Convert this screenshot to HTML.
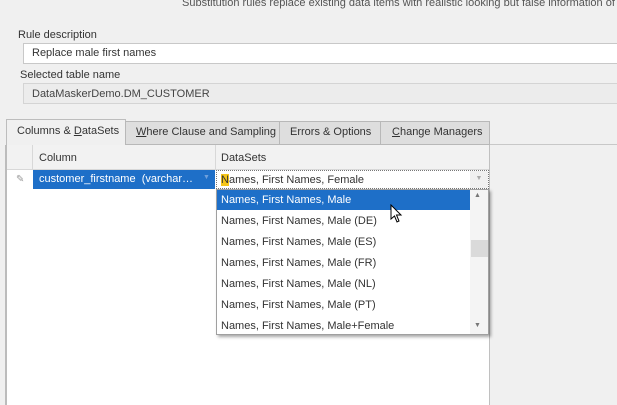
<!DOCTYPE html>
<html><head><style>
*{margin:0;padding:0;box-sizing:border-box}
body{width:617px;height:402px;background:#f0f0f0;font-family:"Liberation Sans",sans-serif;font-size:11px;color:#333;position:relative;overflow:hidden}
.a{position:absolute;white-space:nowrap}
.u{text-decoration:underline}
</style></head><body>
<div class="a" style="left:182px;top:-3px;color:#555">Substitution rules replace existing data items with realistic looking but false information of a</div>
<div class="a" style="left:18px;top:29px">Rule description</div>
<div class="a" style="left:23px;top:43px;width:600px;height:21px;background:#fff;border:1px solid #c8c8c8;padding:3px 0 0 8px">Replace male first names</div>
<div class="a" style="left:20px;top:69px">Selected table name</div>
<div class="a" style="left:23px;top:83px;width:600px;height:21px;background:#ececec;border:1px solid #d4d4d4;padding:4px 0 0 8px;color:#444">DataMaskerDemo.DM_CUSTOMER</div>
<!-- tabs -->
<div class="a" style="left:489px;top:144px;width:128px;height:1px;background:#c8c8c8"></div>
<div class="a" style="left:6px;top:119px;width:120px;height:27px;background:#f0f0f0;border:1px solid #bdbdbd;border-bottom:none;padding:5px 0 0 10px">Columns &amp; <span class="u">D</span>ataSets</div>
<div class="a" style="left:125px;top:121px;width:155px;height:24px;background:#dedede;border:1px solid #b8b8b8;padding:4px 0 0 10px"><span class="u">W</span>here Clause and Sampling</div>
<div class="a" style="left:279px;top:121px;width:102px;height:24px;background:#dedede;border:1px solid #b8b8b8;padding:4px 0 0 10px">Errors &amp; Options</div>
<div class="a" style="left:380px;top:121px;width:110px;height:24px;background:#dedede;border:1px solid #b8b8b8;padding:4px 0 0 11px"><span class="u">C</span>hange Managers</div>
<!-- grid -->
<div class="a" style="left:5px;top:145px;width:485px;height:260px;background:#fff;border-left:2px solid #bcbcbc;border-right:1px solid #c0c0c0"></div>
<div class="a" style="left:7px;top:145px;width:482px;height:25px;background:#f2f2f2;border-bottom:1px solid #d8d8d8"></div>
<div class="a" style="left:32px;top:145px;width:1px;height:25px;background:#d8d8d8"></div>
<div class="a" style="left:215px;top:145px;width:1px;height:25px;background:#d8d8d8"></div>
<div class="a" style="left:39px;top:152px">Column</div>
<div class="a" style="left:221px;top:152px">DataSets</div>
<div class="a" style="left:16px;top:174px;color:#999;font-size:10px">✎</div>
<div class="a" style="left:33px;top:170px;width:182px;height:19px;background:#1e6fc8;color:#fff;padding:3px 0 0 6px">customer_firstname&nbsp; (varchar…<span style="position:absolute;left:170px;top:4px;font-size:7px;color:#6fa0dc">▼</span></div>
<div class="a" style="left:216px;top:170px;width:273px;height:19px;background:#fff;border:1px dotted #777;padding:3px 0 0 4px"><span style="background:#f5c518">N</span>ames, First Names, Female</div>
<div class="a" style="left:470px;top:171px;width:18px;height:17px;background:#f0f0f0;color:#aaa;font-size:7px;text-align:center;padding-top:4px">▼</div>
<!-- popup -->
<div class="a" style="left:216px;top:189px;width:273px;height:146px;background:#fff;border:1px solid #a0a0a0;box-shadow:2px 2px 3px rgba(0,0,0,.35)"></div>
<div class="a" style="left:470px;top:190px;width:18px;height:144px;background:#f4f4f4"></div>
<div class="a" style="left:471px;top:240px;width:17px;height:17px;background:#dadada"></div>
<div class="a" style="left:474px;top:192px;font-size:7px;color:#777">▲</div>
<div class="a" style="left:474px;top:322px;font-size:7px;color:#777">▼</div>
<div class="a" style="left:217px;top:190px;width:253px;height:20px;background:#1e6fc8"></div>
<div class="a" style="left:221px;top:194px;color:#fff">Names, First Names, Male</div>
<div class="a" style="left:221px;top:215px">Names, First Names, Male (DE)</div>
<div class="a" style="left:221px;top:236px">Names, First Names, Male (ES)</div>
<div class="a" style="left:221px;top:257px">Names, First Names, Male (FR)</div>
<div class="a" style="left:221px;top:278px">Names, First Names, Male (NL)</div>
<div class="a" style="left:221px;top:299px">Names, First Names, Male (PT)</div>
<div class="a" style="left:221px;top:320px">Names, First Names, Male+Female</div>
<svg class="a" style="left:390px;top:204px" width="14" height="20" viewBox="0 0 14 20"><path d="M1 1 L1 15 L4.5 12 L7 18 L9 17 L6.5 11 L11 11 Z" fill="#fff" stroke="#000" stroke-width="1"/></svg>
</body></html>
